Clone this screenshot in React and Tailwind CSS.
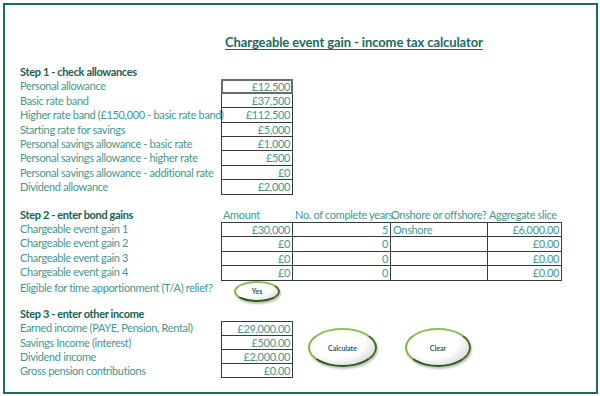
import React from "react";

const step1 = [
    ["Personal allowance", "£12,500"],
    ["Basic rate band", "£37,500"],
    ["Higher rate band (£150,000 - basic rate band)", "£112,500"],
    ["Starting rate for savings", "£5,000"],
    ["Personal savings allowance - basic rate", "£1,000"],
    ["Personal savings allowance - higher rate", "£500"],
    ["Personal savings allowance - additional rate", "£0"],
    ["Dividend allowance", "£2,000"],
];

const gains = [
    ["Chargeable event gain 1", "£30,000", "5", "Onshore", "£6,000.00"],
    ["Chargeable event gain 2", "£0", "0", "", "£0.00"],
    ["Chargeable event gain 3", "£0", "0", "", "£0.00"],
    ["Chargeable event gain 4", "£0", "0", "", "£0.00"],
];

const income = [
    ["Earned income (PAYE, Pension, Rental)", "£29,000.00"],
    ["Savings Income (interest)", "£500.00"],
    ["Dividend income", "£2,000.00"],
    ["Gross pension contributions", "£0.00"],
];

const OvalButton = ({ label, className }) => (
    <div
        className={
            "flex items-center justify-center rounded-[50%] border-2 border-t-[#8cc152] border-l-[#7ab648] border-r-[#3f6e22] border-b-[#2f5a18] bg-[radial-gradient(ellipse_at_40%_35%,#ffffff_50%,#d4d4d4_85%,#a8a8a8_100%)] shadow-[1px_2px_2px_rgba(0,0,0,0.25)] " +
            className
        }
    >
        <span className="text-[7px] font-bold text-[#1f5f5a] tracking-normal">{label}</span>
    </div>
);

const App = () => {
    return (
        <div
            className="w-[600px] h-[396px] bg-white pt-[3px] pl-[3px] pr-[2px] pb-[2px]"
            style={{ fontFamily: "Lato, 'Open Sans', sans-serif" }}
        >
            <div className="h-[391px] border-2 border-[#1e6b57] pl-[15px] text-[11px] text-[#45978e] tracking-[-0.35px]">

                {/* Title */}
                <div className="pt-[28px] pl-[205px] h-[60px]">
                    <span className="text-[13px] font-bold text-[#1b6a5e] underline underline-offset-2 tracking-[-0.1px]">
                        Chargeable event gain - income tax calculator
                    </span>
                </div>

                {/* Step 1 */}
                <div className="h-[14.4px] leading-[14.4px] font-bold text-[#1b5e54]">
                    Step 1 - check allowances
                </div>
                <div className="flex flex-col">
                    {step1.map(([label, value], i) => (
                        <div key={label} className="flex h-[14.4px] leading-[14px]">
                            <div className="w-[201px] whitespace-nowrap">{label}</div>
                            <div
                                className={
                                    i === 0
                                        ? "w-[72px] border-2 border-[#6b6b6b] text-right pr-[1px] leading-[11px] relative z-10"
                                        : "w-[72px] border border-t-0 border-[#3a3a3a] text-right pr-[2px] leading-[13px]"
                                }
                            >
                                {value}
                            </div>
                        </div>
                    ))}
                </div>

                {/* Step 2 */}
                <div className="flex h-[14.4px] leading-[14.4px] mt-[13px] whitespace-nowrap">
                    <div className="w-[203px] font-bold text-[#1b5e54]">Step 2 - enter bond gains</div>
                    <div className="w-[72px]">Amount</div>
                    <div className="w-[96px]">No. of complete years</div>
                    <div className="w-[98px]">Onshore or offshore?</div>
                    <div>Aggregate slice</div>
                </div>
                <div className="flex">
                    <div className="w-[201px]">
                        {gains.map((g) => (
                            <div key={g[0]} className="h-[14.5px] leading-[14px] whitespace-nowrap">{g[0]}</div>
                        ))}
                    </div>
                    <table className="border-collapse">
                        <tbody>
                            {gains.map((g) => (
                                <tr key={g[0]} className="h-[14.5px] leading-[12px]">
                                    <td className="w-[71px] border border-[#3a3a3a] p-0 pr-[2px] text-right">{g[1]}</td>
                                    <td className="w-[98px] border border-[#3a3a3a] p-0 pr-[2px] text-right">{g[2]}</td>
                                    <td className="w-[97px] border border-[#3a3a3a] p-0 pl-[2px] text-left">{g[3]}</td>
                                    <td className="w-[74px] border border-[#3a3a3a] p-0 pr-[2px] text-right">{g[4]}</td>
                                </tr>
                            ))}
                        </tbody>
                    </table>
                </div>
                <div className="flex items-start">
                    <div className="w-[201px] h-[14.4px] leading-[14.4px] whitespace-nowrap">
                        Eligible for time apportionment (T/A) relief?
                    </div>
                    <div className="w-[72px] flex justify-center">
                        <OvalButton label="Yes" className="w-[46px] h-[21px]" />
                    </div>
                </div>

                {/* Step 3 */}
                <div className="h-[14.4px] leading-[14.4px] mt-[5px] font-bold text-[#1b5e54]">
                    Step 3 - enter other income
                </div>
                <div className="flex items-center">
                    <div className="flex flex-col">
                        {income.map(([label, value], i) => (
                            <div key={label} className="flex h-[14.3px] leading-[14px]">
                                <div className="w-[201px] whitespace-nowrap">{label}</div>
                                <div
                                    className={
                                        "w-[72px] border border-[#3a3a3a] text-right pr-[2px] leading-[13px] " +
                                        (i === 0 ? "" : "border-t-0")
                                    }
                                >
                                    {value}
                                </div>
                            </div>
                        ))}
                    </div>
                    <OvalButton label="Calculate" className="w-[69px] h-[39px] ml-[15px] -mt-[4px]" />
                    <OvalButton label="Clear" className="w-[66px] h-[39px] ml-[28px] -mt-[4px]" />
                </div>
            </div>
        </div>
    );
};

export default App;
